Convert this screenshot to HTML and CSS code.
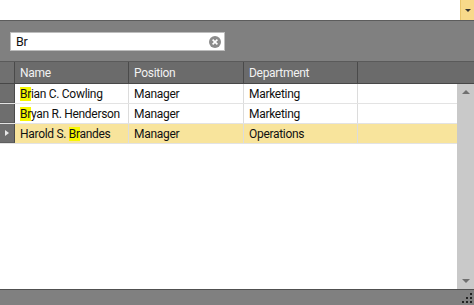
FILE: index.html
```html
<!DOCTYPE html>
<html lang="en">
<head>
  <meta charset="UTF-8">
  <title>Employee Lookup</title>
  <link rel="stylesheet" href="styles.css">
</head>
<body>
<div class="combo">
  <div class="combo-text"></div>
  <div class="combo-btn"><span class="arrow-down"></span></div>
</div>

<div class="panel">
  <div class="search-bar">
    <div class="search">
      <span class="search-text">Br</span>
      <svg class="clear" width="12" height="12" viewBox="0 0 12 12">
        <circle cx="6" cy="6" r="6" fill="#8c8c8c"/>
        <path d="M3.6 3.6 L8.4 8.4 M8.4 3.6 L3.6 8.4" stroke="#fff" stroke-width="1.6"/>
      </svg>
    </div>
  </div>

  <div class="grid">
    <div class="grid-head">
      <div class="corner"></div>
      <div class="head-cell">Name</div>
      <div class="head-cell">Position</div>
      <div class="head-cell">Department</div>
      <div class="head-cell filler"></div>
    </div>

    <div class="grid-body">
      <div class="rows">
        <div class="row">
          <div class="row-header"></div>
          <div class="cell"><span><mark>Br</mark>ian C. Cowling</span></div>
          <div class="cell">Manager</div>
          <div class="cell">Marketing</div>
          <div class="cell filler"></div>
        </div>
        <div class="row">
          <div class="row-header"></div>
          <div class="cell"><span><mark>Br</mark>yan R. Henderson</span></div>
          <div class="cell">Manager</div>
          <div class="cell">Marketing</div>
          <div class="cell filler"></div>
        </div>
        <div class="row selected">
          <div class="row-header"><span class="arrow-right"></span></div>
          <div class="cell"><span>Harold S. <mark>Br</mark>andes</span></div>
          <div class="cell">Manager</div>
          <div class="cell">Operations</div>
          <div class="cell filler"></div>
        </div>
      </div>
      <div class="vscroll">
        <span class="arrow-up"></span>
        <span class="arrow-down dim"></span>
      </div>
    </div>
  </div>

  <div class="status">
    <svg class="grip" width="10" height="10" viewBox="0 0 10 10" fill="#222">
      <rect x="8" y="0" width="2" height="2"/>
      <rect x="4" y="4" width="2" height="2"/>
      <rect x="8" y="4" width="2" height="2"/>
      <rect x="0" y="8" width="2" height="2"/>
      <rect x="4" y="8" width="2" height="2"/>
      <rect x="8" y="8" width="2" height="2"/>
    </svg>
  </div>
</div>
</body>
</html>
```

FILE: styles.css
```css
* {
    margin: 0;
    padding: 0;
    box-sizing: border-box;
}

body {
    width: 474px;
    height: 305px;
    display: flex;
    flex-direction: column;
    font-family: Roboto, "Open Sans", sans-serif;
    font-size: 12px;
    letter-spacing: -0.3px;
    background-color: #fff;
    color: #111;
    overflow: hidden;
}

/* combo box on top */
.combo {
    height: 20px;
    display: flex;
    background-color: #fff;
}

.combo-text {
    flex: 1;
}

.combo-btn {
    width: 14px;
    background-color: #f8d98a;
    border-left: 1px solid #e9c46a;
    display: flex;
    align-items: center;
    justify-content: center;
}

.arrow-down {
    width: 0;
    height: 0;
    border-left: 3px solid transparent;
    border-right: 3px solid transparent;
    border-top: 3px solid #333;
}

.arrow-up {
    width: 0;
    height: 0;
    border-left: 4px solid transparent;
    border-right: 4px solid transparent;
    border-bottom: 4px solid #707070;
}

.arrow-down.dim {
    border-left-width: 4px;
    border-right-width: 4px;
    border-top: 4px solid #707070;
}

.arrow-right {
    width: 0;
    height: 0;
    border-top: 3px solid transparent;
    border-bottom: 3px solid transparent;
    border-left: 4px solid #e8e8e8;
}

/* gray panel */
.panel {
    flex: 1;
    display: flex;
    flex-direction: column;
    background-color: #808080;
    border-top: 1px solid #5c5c5c;
}

.search-bar {
    height: 40px;
    padding: 11px 10px 0;
}

.search {
    width: 215px;
    height: 19px;
    background-color: #fff;
    border: 1px solid #bdbdbd;
    display: flex;
    align-items: center;
    padding: 0 3px 0 5px;
}

.search-text {
    flex: 1;
    color: #111;
    font-size: 12.5px;
}

/* data grid */
.grid {
    flex: 1;
    display: flex;
    flex-direction: column;
}

.grid-head,
.row {
    display: grid;
    grid-template-columns: 15px 114px 115px 114px 1fr;
}

.grid-head {
    height: 23px;
    background-color: #6b6b6b;
    border-top: 1px solid #5a5a5a;
    border-bottom: 1px solid #474747;
}

.corner {
    background-color: #707070;
    border-right: 1px solid #4a4a4a;
}

.head-cell {
    color: #f2f2f2;
    padding-left: 5px;
    display: flex;
    align-items: center;
    border-right: 1px solid #4a4a4a;
}

.head-cell.filler {
    border-right: none;
}

.grid-body {
    flex: 1;
    display: flex;
    background-color: #fff;
}

.rows {
    flex: 1;
}

.row {
    height: 20px;
    border-bottom: 1px solid #e3e3e3;
}

.row-header {
    background-color: #6e6e6e;
    border-right: 1px solid #4a4a4a;
    border-bottom: 1px solid #5f5f5f;
    display: flex;
    align-items: center;
    justify-content: center;
}

.cell {
    padding-left: 5px;
    display: flex;
    align-items: center;
    white-space: nowrap;
    border-right: 1px solid #dcdcdc;
}

.cell.filler {
    border-right: none;
}

.row.selected .cell {
    background-color: #f8e49c;
}

mark {
    background-color: #f7f700;
    color: inherit;
}

.vscroll {
    width: 17px;
    background-color: #c9c9c9;
    display: flex;
    flex-direction: column;
    justify-content: space-between;
    align-items: center;
    padding: 6px 0 6px;
}

/* bottom strip */
.status {
    height: 16px;
    border-top: 1px solid #505050;
    display: flex;
    justify-content: flex-end;
    align-items: flex-end;
    padding: 0 2px 2px 0;
}
```
